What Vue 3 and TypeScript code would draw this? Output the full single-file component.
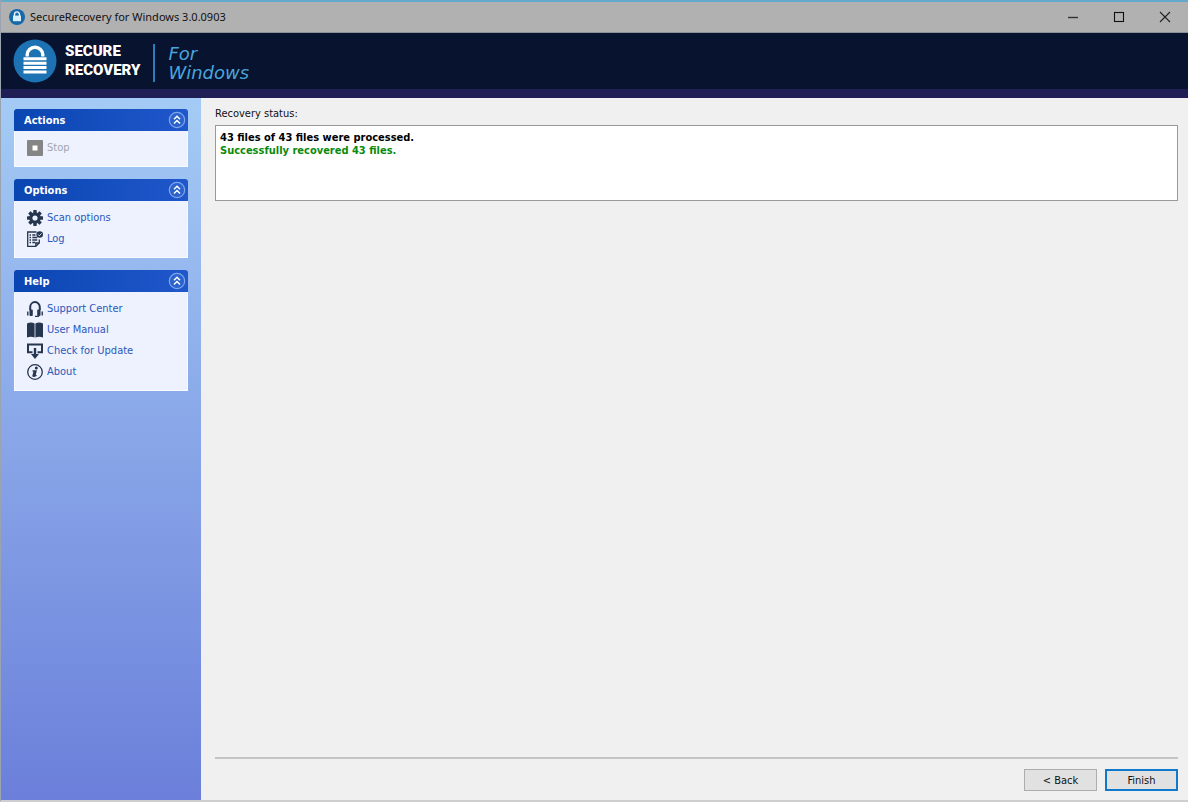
<script setup lang="ts">
interface Item {
  label: string
  icon: string
  disabled?: boolean
}
interface Panel {
  title: string
  items: Item[]
}

const panels: Panel[] = [
  { title: 'Actions', items: [{ label: 'Stop', icon: 'stop', disabled: true }] },
  {
    title: 'Options',
    items: [
      { label: 'Scan options', icon: 'gear' },
      { label: 'Log', icon: 'log' },
    ],
  },
  {
    title: 'Help',
    items: [
      { label: 'Support Center', icon: 'headset' },
      { label: 'User Manual', icon: 'book' },
      { label: 'Check for Update', icon: 'update' },
      { label: 'About', icon: 'info' },
    ],
  },
]
const teeth = [0, 45, 90, 135, 180, 225, 270, 315]
</script>

<template>
  <div class="window">
    <header class="titlebar">
      <svg class="app-icon" viewBox="0 0 16 16" aria-hidden="true">
        <circle cx="8" cy="8" r="8" fill="#1769a8" />
        <path d="M5.5 7V5.4a2.5 2.5 0 0 1 5 0V7" fill="none" stroke="#e8f6ff" stroke-width="1.4" />
        <rect x="4" y="6.6" width="8" height="5.6" fill="#d8effc" />
      </svg>
      <span class="title">SecureRecovery for Windows 3.0.0903</span>
      <div class="controls">
        <button type="button" aria-label="Minimize">
          <svg viewBox="0 0 12 12"><path d="M1 6.5h10" stroke="#333" stroke-width="1.4" /></svg>
        </button>
        <button type="button" aria-label="Maximize">
          <svg viewBox="0 0 12 12"><rect x="1.5" y="1.5" width="9" height="9" fill="none" stroke="#111" stroke-width="1.1" /></svg>
        </button>
        <button type="button" aria-label="Close">
          <svg viewBox="0 0 12 12"><path d="M1 1l10 10M11 1L1 11" stroke="#222" stroke-width="1.1" /></svg>
        </button>
      </div>
    </header>

    <div class="banner">
      <svg class="logo" viewBox="0 0 44 44" aria-hidden="true">
        <circle cx="22" cy="22" r="21.5" fill="#1c72b3" />
        <path d="M14.2 17.5v-2a7.8 7.2 0 0 1 15.600 0v2" fill="none" stroke="#fff" stroke-width="3.4" />
        <path d="M10.500 19.800h23M10.500 24.200h23M10.500 28.600h23M10.500 33h23" stroke="#fff" stroke-width="3" />
      </svg>
      <div class="brand"><span>SECURE</span><span>RECOVERY</span></div>
      <div class="platform"><span>For</span><span>Windows</span></div>
    </div>

    <div class="body">
      <aside class="sidebar">
        <section v-for="panel in panels" :key="panel.title" class="panel">
          <div class="panel-head">
            <h2>{{ panel.title }}</h2>
            <button type="button" class="collapse" :aria-label="'Collapse ' + panel.title">
              <svg viewBox="0 0 18 18">
                <circle cx="9" cy="9" r="7.700" fill="#2c62cb" stroke="#7ea6ee" stroke-width="1.200" />
                <path d="M6 8.300l3-3 3 3M6 12.500l3-3 3 3" fill="none" stroke="#fff" stroke-width="1.500" />
              </svg>
            </button>
          </div>
          <ul>
            <li v-for="item in panel.items" :key="item.label">
              <component
                :is="item.disabled ? 'button' : 'a'"
                class="item"
                :class="{ disabled: item.disabled }"
                :href="item.disabled ? undefined : '#'"
                :disabled="item.disabled || undefined"
              >
                <svg viewBox="0 0 16 16" aria-hidden="true">
                  <template v-if="item.icon === 'stop'">
                    <rect width="16" height="16" rx="1" fill="#858585" />
                    <rect x="5.500" y="5.500" width="5" height="5" fill="#fff" />
                  </template>
                  <template v-else-if="item.icon === 'gear'">
                    <rect v-for="a in teeth" :key="a" x="6.300" y="0" width="3.400" height="5" rx=".5" fill="#26364f" :transform="`rotate(${a} 8 8)`" />
                    <circle cx="8" cy="8" r="4.200" fill="none" stroke="#26364f" stroke-width="3.200" />
                  </template>
                  <template v-else-if="item.icon === 'log'">
                    <path d="M9.500 1H.7v14.300h8.100l3.500-3.300V8.500M8.800 15v-3h3.200" fill="none" stroke="#26364f" stroke-width="1.300" />
                    <path d="M2.500 4h1.500M2.500 6.500h1.500M2.500 9h1.500M2.500 11.500h1.500M5.300 4h3.200M5.300 6.500h5M5.300 9h5M5.300 11.500h3" stroke="#26364f" stroke-width="1.500" />
                    <circle cx="12.700" cy="3.500" r="3.300" fill="#26364f" />
                    <path d="M11 3.500l1.300 1.300 2.300-2.500" fill="none" stroke="#fff" stroke-width=".8" />
                  </template>
                  <template v-else-if="item.icon === 'headset'">
                    <path d="M3.200 9V6.300a4.800 5.200 0 0 1 9.600 0V9" fill="none" stroke="#26364f" stroke-width="2" />
                    <rect x="2.500" y="8.500" width="3.300" height="6.500" rx="1" fill="#26364f" />
                    <rect x="10.200" y="8.500" width="3.300" height="6.500" rx="1" fill="#26364f" />
                    <path d="M.8 10.500v4M15.200 10.500v4M12 15q-1 .6-4 .4" fill="none" stroke="#26364f" stroke-width="1.400" />
                  </template>
                  <template v-else-if="item.icon === 'book'">
                    <path d="M0 1.500Q4-.500 7.600 1.500V15.500Q4 13.800 0 15.500zM8.400 1.500Q12-.500 16 1.500V15.500Q12 13.800 8.400 15.500z" fill="#26364f" />
                  </template>
                  <template v-else-if="item.icon === 'update'">
                    <path d="M5.500 9.200H1V1.500h14v7.700h-4.500" fill="none" stroke="#26364f" stroke-width="2" />
                    <path d="M6.800 5h2.400v6h2.800l-4 5-4-5h2.800z" fill="#26364f" />
                  </template>
                  <template v-else>
                    <circle cx="8" cy="8" r="7.300" fill="none" stroke="#26364f" stroke-width="1.300" />
                    <circle cx="9.300" cy="3.900" r="1.500" fill="#26364f" />
                    <path d="M5.600 6.200h4.300L8.700 11.300l1.300-.4-.4 1.200q-4 2-4.300-.2L6.400 7.400H5.400z" fill="#26364f" />
                  </template>
                </svg>
                <span>{{ item.label }}</span>
              </component>
            </li>
          </ul>
        </section>
      </aside>

      <main class="content">
        <h1 id="status-label">Recovery status:</h1>
        <div class="status" role="log" aria-labelledby="status-label">
          <p>43 files of 43 files were processed.</p>
          <p class="success">Successfully recovered 43 files.</p>
        </div>
        <footer class="actions">
          <button type="button">&lt; Back</button>
          <button type="button" class="primary">Finish</button>
        </footer>
      </main>
    </div>
  </div>
</template>

<style>
body {
  margin: 0;
}
</style>

<style scoped>
* {
  box-sizing: border-box;
}
.window {
  display: flex;
  flex-direction: column;
  min-height: 100vh;
  border-left: 1px solid #9aa3b0;
  border-bottom: 2px solid #cfcfd2;
  background: #f0f0f0;
  color: #111;
  font: 11px/13px "DejaVu Sans Condensed", "DejaVu Sans", sans-serif;
}
button {
  font: inherit;
  color: inherit;
}
.titlebar {
  display: flex;
  align-items: center;
  height: 33px;
  padding-left: 8px;
  border-top: 2px solid #62a9cc;
  border-bottom: 1px solid #8d8f9a;
  background: #b1b1b1;
}
.app-icon {
  width: 16px;
  height: 16px;
}
.title {
  margin-left: 5px;
  font: 11px/16px "Noto Sans", sans-serif;
}
.controls {
  display: flex;
  margin-left: auto;
}
.controls button {
  display: grid;
  place-items: center;
  width: 46px;
  height: 29px;
  padding: 0;
  border: 0;
  background: none;
}
.controls svg {
  width: 12px;
  height: 12px;
}
.banner {
  display: flex;
  align-items: center;
  height: 65px;
  padding: 0 12px;
  border-bottom: 9px solid #1f1f56;
  background: #08132f;
}
.logo {
  width: 44px;
  height: 44px;
}
.brand,
.platform {
  display: flex;
  flex-direction: column;
}
.brand {
  flex: 0 0 74px;
  margin-left: 8px;
  color: #fff;
  font: 900 15px/19px Roboto, sans-serif;
}
.platform {
  margin: 4px 0 0 13px;
  padding-left: 13px;
  border-left: 2px solid #2b7fb8;
  color: #4aa5dc;
  font: italic 18px/19px "DejaVu Sans", sans-serif;
}
.body {
  display: flex;
  flex: 1;
}
.sidebar {
  display: flex;
  flex: 0 0 200px;
  flex-direction: column;
  gap: 12px;
  padding: 11px 13px;
  background: linear-gradient(#a4cbf5, #6b7fda);
}
.panel-head {
  display: flex;
  align-items: center;
  justify-content: space-between;
  height: 22px;
  padding: 0 2px 0 10px;
  border-radius: 3px 3px 0 0;
  background: linear-gradient(90deg, #0a46b2, #2057cb);
  color: #fff;
}
.panel-head h2 {
  margin: 0;
  font: inherit;
  font-weight: bold;
}
.collapse {
  padding: 0;
  border: 0;
  background: none;
  line-height: 0;
}
.collapse svg {
  width: 18px;
  height: 18px;
}
ul {
  margin: 0;
  padding: 6px 12px 8px;
  border: 1px solid #f8faff;
  border-top: 0;
  background: #edf2fe;
  list-style: none;
}
.item {
  display: flex;
  align-items: center;
  gap: 4px;
  height: 21px;
  padding: 0;
  border: 0;
  background: none;
  color: #2a57bb;
  text-decoration: none;
}
.item svg {
  width: 16px;
  height: 16px;
}
.item.disabled {
  color: #a2a5ad;
}
.content {
  display: flex;
  flex: 1;
  flex-direction: column;
  padding: 9px 10px 9px 14px;
}
h1 {
  margin: 0 0 5px;
  font: inherit;
}
.status {
  min-height: 76px;
  padding: 5px 4px;
  border: 1px solid #999;
  background: #fff;
  color: #000;
  font-weight: bold;
}
.status p {
  margin: 0;
}
.status .success {
  color: #098a0d;
}
.actions {
  display: flex;
  justify-content: flex-end;
  gap: 8px;
  margin-top: auto;
  padding-top: 10px;
  border-top: 2px solid #c4c4c4;
}
.actions button {
  width: 73px;
  height: 22px;
  padding: 0;
  border: 1px solid #adadad;
  background: #e1e1e1;
}
.actions .primary {
  border: 2px solid #1079cc;
}
</style>
